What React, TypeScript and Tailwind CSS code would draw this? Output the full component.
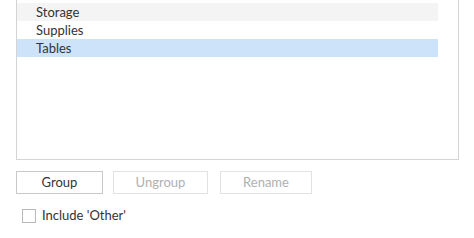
import { useState } from 'react';

const items = ['Storage', 'Supplies', 'Tables'];

export default function App() {
  const [selected, setSelected] = useState('Tables');
  const [other, setOther] = useState(false);

  return (
    <div
      className="h-[238px] w-[474px] overflow-hidden bg-white text-[13px] text-[#333]"
      style={{ fontFamily: 'Lato, "Liberation Sans", sans-serif' }}
    >
      <div className="ml-4 mr-[15px] h-[160px] overflow-hidden border-x border-b border-[#d4d4d4]">
        <ul className="mt-[3px] pr-5">
          {items.map((it, i) => (
            <li
              key={it}
              onClick={() => setSelected(it)}
              className={`flex h-[18px] items-center pl-[19px] leading-none ${
                selected === it ? 'bg-[#cce3fa]' : i % 2 === 0 ? 'bg-[#f4f4f4]' : 'bg-white'
              }`}
            >
              {it}
            </li>
          ))}
        </ul>
      </div>

      <div className="ml-4 mt-[11px] flex gap-[10px]">
        <button className="h-[23px] w-[87px] border border-[#c9c9c9] bg-white text-[13px] text-[#333]">
          Group
        </button>
        <button
          disabled
          className="h-[23px] w-[95px] border border-[#e2e2e2] bg-white text-[13px] text-[#b0b0b0]"
        >
          Ungroup
        </button>
        <button
          disabled
          className="ml-[2px] h-[23px] w-[92px] border border-[#e2e2e2] bg-white text-[13px] text-[#b0b0b0]"
        >
          Rename
        </button>
      </div>

      <label className="ml-[22px] mt-[12px] flex items-center gap-[6px]">
        <span
          onClick={() => setOther(!other)}
          className={`h-[14px] w-[14px] border border-[#b8b8b8] ${other ? 'bg-[#cce3fa]' : 'bg-white'}`}
        />
        <span>Include 'Other'</span>
      </label>
    </div>
  );
}
